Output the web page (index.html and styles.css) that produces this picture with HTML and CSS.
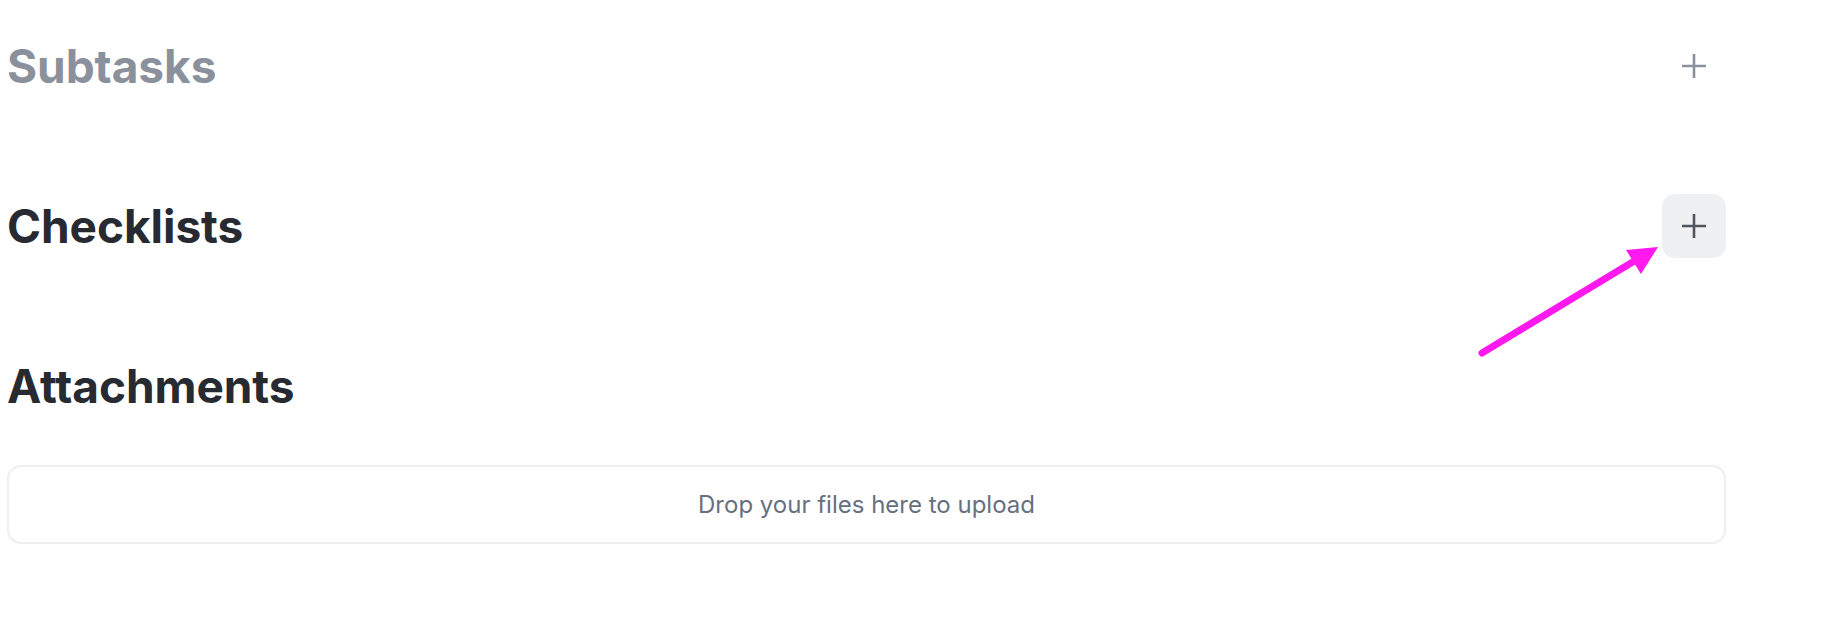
FILE: index.html
```html
<!DOCTYPE html>
<html lang="en">
<head>
    <meta charset="UTF-8" />
    <meta name="viewport" content="width=device-width, initial-scale=1.0" />
    <title>Task details</title>
    <link rel="stylesheet" href="styles.css">
</head>
<body>
    <div class="panel">
        <!-- Subtasks -->
        <div class="section-head">
            <h2 class="section-title muted">Subtasks</h2>
            <button class="add-btn muted-btn" title="Add subtask">
                <svg width="24" height="24" viewBox="0 0 24 24"><path d="M12 0v24M0 12h24" /></svg>
            </button>
        </div>

        <!-- Checklists -->
        <div class="section-head">
            <h2 class="section-title">Checklists</h2>
            <button class="add-btn active-btn" title="Add checklist">
                <svg width="24" height="24" viewBox="0 0 24 24"><path d="M12 0v24M0 12h24" /></svg>
            </button>
        </div>

        <!-- Attachments -->
        <div class="section-head">
            <h2 class="section-title">Attachments</h2>
        </div>
        <div class="dropzone">Drop your files here to upload</div>
    </div>

    <!-- annotation arrow -->
    <svg class="annotation" width="1822" height="632" viewBox="0 0 1822 632">
        <line x1="1482" y1="353" x2="1636" y2="260" stroke="#ff19ee" stroke-width="7" stroke-linecap="round" />
        <polygon points="1658,247 1626,250 1641,274" fill="#ff19ee" />
    </svg>
</body>
</html>
```

FILE: styles.css
```css
body {
    font-family: Inter, "Noto Sans", sans-serif;
    background-color: #fff;
    margin: 0;
    padding: 0;
}
.panel {
    width: 1719px;
    margin-left: 7px;
    padding-top: 34px;
}
.section-head {
    display: flex;
    justify-content: space-between;
    align-items: center;
    height: 64px;
    margin-bottom: 96px;
}
.section-head:nth-child(3) {
    margin-bottom: 47px;
}
.section-title {
    margin: 0;
    font-size: 46px;
    font-weight: 700;
    color: #272a31;
    letter-spacing: -0.05px;
}
.section-title.muted {
    color: #8a919d;
}
.add-btn {
    width: 64px;
    height: 64px;
    border: none;
    border-radius: 13px;
    background: transparent;
    display: flex;
    align-items: center;
    justify-content: center;
    padding: 0;
    cursor: pointer;
}
.add-btn svg path {
    fill: none;
    stroke-width: 2.6;
}
.muted-btn svg path {
    stroke: #8a909c;
}
.active-btn {
    background-color: #eff0f2;
}
.active-btn svg path {
    stroke: #50545f;
}
.dropzone {
    height: 75px;
    border: 2px solid #efeff1;
    border-radius: 14px;
    display: flex;
    align-items: center;
    justify-content: center;
    font-size: 24px;
    color: #667080;
}
.annotation {
    position: absolute;
    top: 0;
    left: 0;
    pointer-events: none;
}
```
